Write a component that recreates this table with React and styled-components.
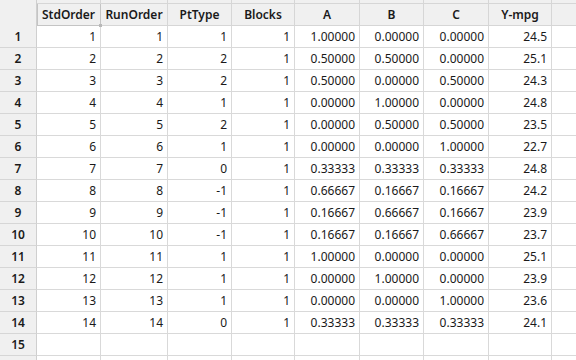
import React from "react";
import styled, { createGlobalStyle } from "styled-components";

const Global = createGlobalStyle`
  html, body { margin: 0; padding: 0; background: #ffffff; }
  body { width: 576px; height: 360px; overflow: hidden; font-family: "Noto Sans", "Open Sans", sans-serif; }
  * { box-sizing: border-box; }
`;

const COLS = "37px 64px 67px 64px 63px 65px 64px 65px 63px 60px";

const Sheet = styled.div`
  width: 576px;
  height: 360px;
  overflow: hidden;
  display: flex;
  flex-direction: column;
  background: #fff;
`;

const Row = styled.div`
  display: grid;
  grid-template-columns: ${COLS};
  height: ${(p) => p.$h}px;
  flex: none;
`;

const Corner = styled.div`
  background: #f0f0f0;
  border-right: 1px solid #cfcfcf;
`;

const StripCell = styled.div`
  background: #f0f0f0;
  border-right: 1px solid #d6d6d6;
  border-bottom: 1px solid #d6d6d6;
`;

const HeadCell = styled.div`
  position: relative;
  background: #f0f0f0;
  border-right: 1px solid ${(p) => (p.$active ? "#c4c4c4" : "#d6d6d6")};
  border-bottom: 1px solid ${(p) => (p.$active ? "#c4c4c4" : "#d6d6d6")};
  ${(p) => (p.$active ? "box-shadow: inset 1px 0 0 #c4c4c4;" : "")}
  display: flex;
  align-items: center;
  justify-content: center;
  font-size: 12px;
  font-weight: 600;
  color: #1a1a1a;
  white-space: nowrap;
`;

const Handle = styled.span`
  position: absolute;
  right: -2px;
  bottom: -2px;
  width: 3px;
  height: 3px;
  background: #b8b8b8;
  z-index: 2;
`;

const RowHead = styled.div`
  background: #f0f0f0;
  border-right: 1px solid #cfcfcf;
  border-bottom: 1px solid #d6d6d6;
  display: flex;
  align-items: center;
  justify-content: center;
  font-size: 12px;
  font-weight: 600;
  color: #1a1a1a;
`;

const Cell = styled.div`
  background: #fff;
  border-right: 1px solid #d9d9d9;
  border-bottom: 1px solid #d9d9d9;
  display: flex;
  align-items: center;
  justify-content: flex-end;
  padding-right: 4px;
  font-size: 12px;
  color: #1a1a1a;
  white-space: nowrap;
`;

const headers = ["StdOrder", "RunOrder", "PtType", "Blocks", "A", "B", "C", "Y-mpg", ""];

const f = (v) => v.toFixed(5);
const t = "0.33333";
const raw = [
  [1, 1, 1, 1, f(1), f(0), f(0), "24.5"],
  [2, 2, 2, 1, f(0.5), f(0.5), f(0), "25.1"],
  [3, 3, 2, 1, f(0.5), f(0), f(0.5), "24.3"],
  [4, 4, 1, 1, f(0), f(1), f(0), "24.8"],
  [5, 5, 2, 1, f(0), f(0.5), f(0.5), "23.5"],
  [6, 6, 1, 1, f(0), f(0), f(1), "22.7"],
  [7, 7, 0, 1, t, t, t, "24.8"],
  [8, 8, -1, 1, "0.66667", "0.16667", "0.16667", "24.2"],
  [9, 9, -1, 1, "0.16667", "0.66667", "0.16667", "23.9"],
  [10, 10, -1, 1, "0.16667", "0.16667", "0.66667", "23.7"],
  [11, 11, 1, 1, f(1), f(0), f(0), "25.1"],
  [12, 12, 1, 1, f(0), f(1), f(0), "23.9"],
  [13, 13, 1, 1, f(0), f(0), f(1), "23.6"],
  [14, 14, 0, 1, t, t, t, "24.1"],
  ["", "", "", "", "", "", "", ""],
  ["", "", "", "", "", "", "", ""],
];

export default function App() {
  return (
    <>
      <Global />
      <Sheet>
        <Row $h={4}>
          <Corner />
          {headers.map((_, i) => (
            <StripCell key={i} />
          ))}
        </Row>
        <Row $h={22}>
          <Corner />
          {headers.map((h, i) => (
            <HeadCell key={i} $active={i === 0}>
              {h}
              {i === 0 && <Handle />}
            </HeadCell>
          ))}
        </Row>
        {raw.map((r, ri) => (
          <Row $h={22} key={ri}>
            <RowHead>{ri < 15 ? ri + 1 : ""}</RowHead>
            {r.map((v, ci) => (
              <Cell key={ci}>{v}</Cell>
            ))}
            <Cell />
          </Row>
        ))}
      </Sheet>
    </>
  );
}
